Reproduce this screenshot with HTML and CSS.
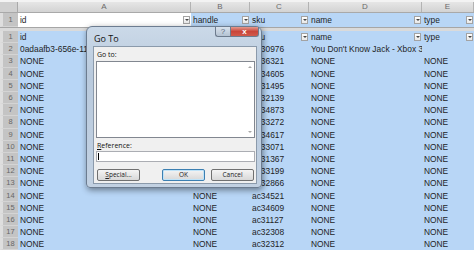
FILE: index.html
```html
<!DOCTYPE html>
<html lang="en">

<head>
  <meta charset="UTF-8">
  <title>Go To</title>
  <link rel="stylesheet" href="styles.css">
</head>

<body>
  <div class="sheet">
    <div class="top-strip"></div>

    <div class="col-heads">
      <div class="corner"></div>
      <div class="ch">A</div>
      <div class="ch">B</div>
      <div class="ch">C</div>
      <div class="ch">D</div>
      <div class="ch">E</div>
    </div>

    <div class="row frozen">
      <div class="rh">1</div>
      <div class="c active"><span class="txt">id</span><span class="dd"></span></div>
      <div class="c"><span class="txt">handle</span><span class="dd"></span></div>
      <div class="c"><span class="txt">sku</span><span class="dd"></span></div>
      <div class="c"><span class="txt">name</span><span class="dd"></span></div>
      <div class="c"><span class="txt">type</span><span class="dd"></span></div>
    </div>

    <div class="split"></div>

    <div class="rows">
      <div class="row">
        <div class="rh">1</div>
        <div class="c"><span class="txt">id</span><span class="dd"></span></div>
        <div class="c"><span class="txt">handle</span><span class="dd"></span></div>
        <div class="c"><span class="txt">sku</span><span class="dd"></span></div>
        <div class="c"><span class="txt">name</span><span class="dd"></span></div>
        <div class="c"><span class="txt">type</span><span class="dd"></span></div>
      </div>
      <div class="row">
        <div class="rh">2</div>
        <div class="c">0adaafb3-656e-11e1-8e7a-12313d1c6a5f</div>
        <div class="c">NONE</div>
        <div class="c">ac30976</div>
        <div class="c">You Don't Know Jack - Xbox 360</div>
        <div class="c"></div>
      </div>
      <div class="row"><div class="rh">3</div><div class="c">NONE</div><div class="c">NONE</div><div class="c">ac36321</div><div class="c">NONE</div><div class="c">NONE</div></div>
      <div class="row"><div class="rh">4</div><div class="c">NONE</div><div class="c">NONE</div><div class="c">ac34605</div><div class="c">NONE</div><div class="c">NONE</div></div>
      <div class="row"><div class="rh">5</div><div class="c">NONE</div><div class="c">NONE</div><div class="c">ac31495</div><div class="c">NONE</div><div class="c">NONE</div></div>
      <div class="row"><div class="rh">6</div><div class="c">NONE</div><div class="c">NONE</div><div class="c">ac32139</div><div class="c">NONE</div><div class="c">NONE</div></div>
      <div class="row"><div class="rh">7</div><div class="c">NONE</div><div class="c">NONE</div><div class="c">ac34873</div><div class="c">NONE</div><div class="c">NONE</div></div>
      <div class="row"><div class="rh">8</div><div class="c">NONE</div><div class="c">NONE</div><div class="c">ac33272</div><div class="c">NONE</div><div class="c">NONE</div></div>
      <div class="row"><div class="rh">9</div><div class="c">NONE</div><div class="c">NONE</div><div class="c">ac34617</div><div class="c">NONE</div><div class="c">NONE</div></div>
      <div class="row"><div class="rh">10</div><div class="c">NONE</div><div class="c">NONE</div><div class="c">ac33071</div><div class="c">NONE</div><div class="c">NONE</div></div>
      <div class="row"><div class="rh">11</div><div class="c">NONE</div><div class="c">NONE</div><div class="c">ac31367</div><div class="c">NONE</div><div class="c">NONE</div></div>
      <div class="row"><div class="rh">12</div><div class="c">NONE</div><div class="c">NONE</div><div class="c">ac33199</div><div class="c">NONE</div><div class="c">NONE</div></div>
      <div class="row"><div class="rh">13</div><div class="c">NONE</div><div class="c">NONE</div><div class="c">ac32866</div><div class="c">NONE</div><div class="c">NONE</div></div>
      <div class="row"><div class="rh">14</div><div class="c">NONE</div><div class="c">NONE</div><div class="c">ac34521</div><div class="c">NONE</div><div class="c">NONE</div></div>
      <div class="row"><div class="rh">15</div><div class="c">NONE</div><div class="c">NONE</div><div class="c">ac34609</div><div class="c">NONE</div><div class="c">NONE</div></div>
      <div class="row"><div class="rh">16</div><div class="c">NONE</div><div class="c">NONE</div><div class="c">ac31127</div><div class="c">NONE</div><div class="c">NONE</div></div>
      <div class="row"><div class="rh">17</div><div class="c">NONE</div><div class="c">NONE</div><div class="c">ac32308</div><div class="c">NONE</div><div class="c">NONE</div></div>
      <div class="row"><div class="rh">18</div><div class="c">NONE</div><div class="c">NONE</div><div class="c">ac32312</div><div class="c">NONE</div><div class="c">NONE</div></div>
    </div>
  </div>

  <!-- Go To dialog floats over the sheet -->
  <div class="dialog">
    <div class="titlebar">
      <span class="title">Go To</span>
      <span class="tb-btn help">?</span>
      <span class="tb-btn close">x</span>
    </div>
    <div class="client">
      <div class="lbl">Go to:</div>
      <div class="listbox">
        <div class="scroll">
          <span class="arrow up"></span>
          <span class="arrow down"></span>
        </div>
      </div>
      <div class="lbl ref"><u>R</u>eference:</div>
      <div class="input"><span class="caret"></span></div>
      <div class="buttons">
        <button class="btn"><u>S</u>pecial...</button>
        <button class="btn default">OK</button>
        <button class="btn">Cancel</button>
      </div>
    </div>
  </div>
</body>

</html>
```

FILE: styles.css
```css
body {
  margin: 0;
  width: 474px;
  height: 257px;
  overflow: hidden;
  background-color: #fff;
  font-family: "Liberation Sans", Arial, sans-serif;
  position: relative;
}

.sheet {
  display: flex;
  flex-direction: column;
}

.top-strip {
  height: 2px;
  background-color: #f3f3f3;
}

.col-heads,
.row {
  display: grid;
  grid-template-columns: 18px 173px 59px 59px 113px 52px;
}

.col-heads {
  height: 11px;
  background: linear-gradient(#e6e6e6, #d3d3d3);
  border-bottom: 1px solid #a9a9a9;
  box-sizing: border-box;
}

.corner {
  background-color: #d0d0d0;
  border-right: 1px solid #a9a9a9;
}

.ch {
  font-size: 8px;
  line-height: 10px;
  color: #6a6a6a;
  text-align: center;
  border-right: 1px solid #b3b3b3;
}

.row {
  height: 12.2px;
  background-color: #b8d6f6;
}

.frozen {
  height: 14px;
}

.split {
  height: 4px;
  background-color: #dadada;
  border-top: 1px solid #a6a6a6;
  box-sizing: border-box;
}

.rh {
  background-color: #c4c4c4;
  border-left: 3px solid #dedede;
  border-bottom: 1px solid #d4d4d4;
  box-sizing: border-box;
  font-size: 7.5px;
  color: #666;
  text-align: center;
  display: flex;
  align-items: center;
  justify-content: center;
}

.c {
  display: flex;
  align-items: center;
  padding-left: 2px;
  font-size: 8.4px;
  color: #1e1e1e;
  white-space: nowrap;
  overflow: hidden;
}

.c.active {
  background-color: #fff;
}

.c .txt {
  flex: 1;
}

.dd {
  width: 7px;
  height: 8px;
  margin-right: 1px;
  box-sizing: border-box;
  border: 1px solid #a3a3a3;
  background: linear-gradient(#ffffff, #e8e8e8);
  position: relative;
}

.dd::after {
  content: "";
  position: absolute;
  left: 1px;
  top: 2px;
  border-left: 2px solid transparent;
  border-right: 2px solid transparent;
  border-top: 2px solid #444;
}

/* dialog */
.dialog {
  position: absolute;
  left: 86px;
  top: 26px;
  width: 176px;
  height: 162px;
  box-sizing: border-box;
  border: 1px solid #6c7c90;
  border-radius: 6px 6px 4px 4px;
  background: linear-gradient(#cbd9e8, #b9cadd 30%, #c2d1e2);
  box-shadow: 1px 2px 6px rgba(0, 0, 0, 0.45);
  display: flex;
  flex-direction: column;
  font-family: "Open Sans", "Noto Sans", sans-serif;
}

.titlebar {
  height: 19px;
  display: flex;
  align-items: flex-start;
  padding: 0 2px 0 7px;
}

.title {
  flex: 1;
  font-size: 9px;
  line-height: 9px;
  margin-top: 7px;
  color: #111;
}

.tb-btn {
  height: 10px;
  box-sizing: border-box;
  border: 1px solid #6d7b8d;
  border-top: none;
  font-size: 8px;
  line-height: 9px;
  text-align: center;
  font-family: "Liberation Sans", Arial, sans-serif;
}

.help {
  width: 15px;
  border-radius: 0 0 0 3px;
  border-right: none;
  background: linear-gradient(#d9e2ec, #b4c2d2);
  color: #5b6b80;
}

.close {
  width: 29px;
  border-radius: 0 0 3px 0;
  background: linear-gradient(#e49a8e, #c9463a 50%, #d15a4b);
  color: #fff;
  font-weight: bold;
}

.client {
  flex: 1;
  margin: 0 4px 3px 6px;
  padding: 3px 1px 2px 2px;
  background-color: #f0f0f0;
  border: 1px solid #8b9aab;
  display: flex;
  flex-direction: column;
}

.lbl {
  height: 9px;
  font-size: 7px;
  line-height: 9px;
  padding-left: 1px;
  color: #111;
  margin-bottom: 2px;
}

.lbl.ref {
  margin-top: 3px;
  margin-bottom: 1px;
}

.listbox {
  height: 77px;
  box-sizing: border-box;
  border: 1px solid #828790;
  background-color: #fff;
  display: flex;
  justify-content: flex-end;
}

.scroll {
  width: 9px;
  display: flex;
  flex-direction: column;
  justify-content: space-between;
  align-items: center;
  padding: 4px 0;
}

.arrow {
  border-left: 2px solid transparent;
  border-right: 2px solid transparent;
}

.arrow.up {
  border-bottom: 2px solid #a8a8a8;
}

.arrow.down {
  border-top: 2px solid #a8a8a8;
}

.input {
  height: 11px;
  box-sizing: border-box;
  border: 1px solid #abadb3;
  background-color: #fff;
  display: flex;
  align-items: center;
  padding-left: 1px;
}

.caret {
  width: 1px;
  height: 7px;
  background-color: #000;
}

.buttons {
  display: flex;
  gap: 6px;
  margin-top: 7px;
}

.btn {
  width: 43px;
  height: 12px;
  padding: 0;
  box-sizing: border-box;
  border: 1px solid #707070;
  border-radius: 2px;
  background: linear-gradient(#f4f4f4, #e6e6e6 50%, #d8d8d8);
  font-family: "Open Sans", "Noto Sans", sans-serif;
  font-size: 6.5px;
  line-height: 10px;
  color: #222;
}

.btn:first-child {
  margin-left: 1px;
  margin-right: 16px;
}

.btn.default {
  border-color: #3c7fb1;
  box-shadow: inset 0 0 0 1px #bfe3f8;
}
```
